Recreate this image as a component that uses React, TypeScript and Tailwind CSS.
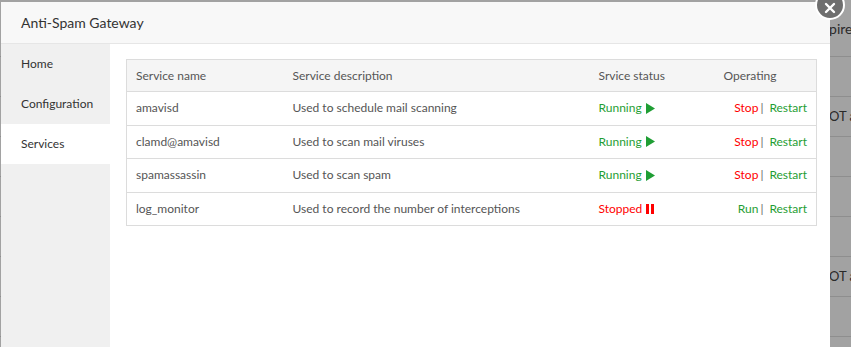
const services = [
  { name: 'amavisd', desc: 'Used to schedule mail scanning', running: true },
  { name: 'clamd@amavisd', desc: 'Used to scan mail viruses', running: true },
  { name: 'spamassassin', desc: 'Used to scan spam', running: true },
  { name: 'log_monitor', desc: 'Used to record the number of interceptions', running: false },
]

const tabs = ['Home', 'Configuration', 'Services']

const bgRows = ['', 'NOT active', '', '', '', 'NOT active', '', '']

function PlayIcon() {
  return (
    <svg width="9" height="11" viewBox="0 0 9 11">
      <path d="M0 0 L9 5.5 L0 11 Z" fill="#1f9e34" />
    </svg>
  )
}

function PauseIcon() {
  return (
    <svg width="8" height="10" viewBox="0 0 8 10">
      <rect x="0" y="0" width="3" height="10" fill="#f00" />
      <rect x="5" y="0" width="3" height="10" fill="#f00" />
    </svg>
  )
}

export default function App() {
  return (
    <div
      className="relative w-[851px] h-[347px] overflow-hidden bg-[#a2a2a2] text-[#333]"
      style={{ fontFamily: '"Segoe UI", Lato, sans-serif' }}
    >
      {/* page behind the overlay */}
      <div className="flex flex-col">
        <div className="h-[57px] border-b border-[#8e8e8e] flex items-center pl-[814px] text-[14px] text-[#2a2a2a]">
          Expire
        </div>
        {bgRows.map((t, i) => (
          <div
            key={i}
            className="h-[40px] border-b border-[#8e8e8e] flex items-center pl-[819px] text-[13px] text-[#2a2a2a] whitespace-nowrap"
          >
            {t}
          </div>
        ))}
      </div>

      {/* modal */}
      <div className="absolute left-[1px] top-[2px] w-[829px] h-[360px] bg-white flex flex-col">
        <div className="h-[42px] shrink-0 bg-[#f8f8f8] border-b border-[#e6e6e6] flex items-center px-[20px] text-[14px] text-[#333]">
          Anti-Spam Gateway
        </div>
        <div className="flex flex-1">
          <div className="w-[109px] bg-[#f0f0f0] flex flex-col">
            {tabs.map((t) => (
              <div
                key={t}
                className={`h-[40px] flex items-center pl-[20px] text-[12px] text-[#333] ${
                  t === 'Services' ? 'bg-white' : ''
                }`}
              >
                {t}
              </div>
            ))}
          </div>
          <div className="flex-1 pl-[16px] pt-[15px]">
            <table className="w-[690px] border-collapse text-[12px] text-[#555] table-fixed">
              <colgroup>
                <col className="w-[157px]" />
                <col className="w-[306px]" />
                <col className="w-[125px]" />
                <col className="w-[102px]" />
              </colgroup>
              <thead>
                <tr className="h-[32px] bg-[#f5f5f5] border border-[#dcdcdc]">
                  <th className="font-normal text-left pl-[9px]">Service name</th>
                  <th className="font-normal text-left pl-[9px]">Service description</th>
                  <th className="font-normal text-left pl-[9px]">Srvice status</th>
                  <th className="font-normal text-left pl-[9px]">Operating</th>
                </tr>
              </thead>
              <tbody>
                {services.map((s) => (
                  <tr key={s.name} className="h-[33.5px] border border-[#dcdcdc]">
                    <td className="pl-[9px]">{s.name}</td>
                    <td className="pl-[9px]">{s.desc}</td>
                    <td className="pl-[9px]">
                      {s.running ? (
                        <span className="inline-flex items-center gap-[4px] text-[#1f9e34]">
                          Running
                          <PlayIcon />
                        </span>
                      ) : (
                        <span className="inline-flex items-center gap-[4px] text-[#f00]">
                          Stopped
                          <PauseIcon />
                        </span>
                      )}
                    </td>
                    <td className="text-right pr-[9px] whitespace-nowrap">
                      {s.running ? (
                        <span className="text-[#f00]">Stop</span>
                      ) : (
                        <span className="text-[#1f9e34]">Run</span>
                      )}
                      <span className="text-[#666] ml-[2px] mr-[6px]">|</span>
                      <span className="text-[#1f9e34]">Restart</span>
                    </td>
                  </tr>
                ))}
              </tbody>
            </table>
          </div>
        </div>
      </div>

      {/* close button */}
      <div className="absolute left-[815px] top-[-10px] w-[30px] h-[30px] rounded-full bg-[#6e6e6e] border-[2px] border-white flex items-center justify-center">
        <svg width="14" height="14" viewBox="0 0 14 14" className="mt-[6px]">
          <path d="M3 3 L11 11 M11 3 L3 11" stroke="white" strokeWidth="2.4" strokeLinecap="round" />
        </svg>
      </div>
    </div>
  )
}
